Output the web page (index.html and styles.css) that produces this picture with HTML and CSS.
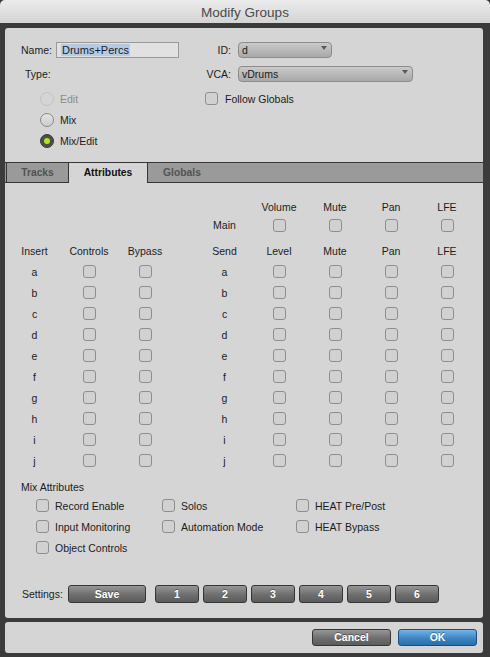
FILE: index.html
```html
<!DOCTYPE html>
<html lang="en">
<head>
  <meta charset="UTF-8" />
  <title>Modify Groups</title>
  <link rel="stylesheet" href="styles.css">
</head>
<body>
  <div class="titlebar">Modify Groups</div>

  <div class="frame">
    <div class="panel main">
      <div class="head">
        <div class="head-left">
          <div class="row name-row">
            <span class="name-label">Name:</span>
            <div class="textbox"><span class="sel">Drums+Percs</span></div>
          </div>
          <div class="row type-row">Type:</div>
          <div class="radios">
            <div class="radio-row disabled"><span class="radio"></span>Edit</div>
            <div class="radio-row"><span class="radio"></span>Mix</div>
            <div class="radio-row"><span class="radio on"></span>Mix/Edit</div>
          </div>
        </div>
        <div class="head-right">
          <div class="row">
            <span class="sel-label">ID:</span>
            <div class="select id-select">d<span class="arrow"></span></div>
          </div>
          <div class="row vca-row">
            <span class="sel-label">VCA:</span>
            <div class="select vca-select">vDrums<span class="arrow"></span></div>
          </div>
          <div class="check-row follow"><span class="cb"></span>Follow Globals</div>
        </div>
      </div>

      <div class="tabs">
        <div class="tab tracks">Tracks</div>
        <div class="tab active">Attributes</div>
        <div class="tab globals">Globals</div>
      </div>

      <div class="attr-grid" id="attrGrid">
        <span></span><span></span><span></span><span></span><span></span>
        <span class="lbl">Volume</span><span class="lbl">Mute</span><span class="lbl">Pan</span><span class="lbl">LFE</span>

        <span></span><span></span><span></span><span></span>
        <span class="lbl">Main</span>
        <span class="cb"></span><span class="cb"></span><span class="cb"></span><span class="cb"></span>

        <span class="lbl colhead">Insert</span><span class="lbl colhead">Controls</span><span class="lbl colhead">Bypass</span><span></span>
        <span class="lbl colhead">Send</span><span class="lbl colhead">Level</span><span class="lbl colhead">Mute</span><span class="lbl colhead">Pan</span><span class="lbl colhead">LFE</span>
      </div>

      <div class="mix-title">Mix Attributes</div>
      <div class="mix-grid">
        <div class="check-row"><span class="cb"></span>Record Enable</div>
        <div class="check-row"><span class="cb"></span>Solos</div>
        <div class="check-row"><span class="cb"></span>HEAT Pre/Post</div>
        <div class="check-row"><span class="cb"></span>Input Monitoring</div>
        <div class="check-row"><span class="cb"></span>Automation Mode</div>
        <div class="check-row"><span class="cb"></span>HEAT Bypass</div>
        <div class="check-row"><span class="cb"></span>Object Controls</div>
      </div>

      <div class="settings">
        <span class="settings-label">Settings:</span>
        <div class="btn save">Save</div>
        <div class="btn num">1</div>
        <div class="btn num">2</div>
        <div class="btn num">3</div>
        <div class="btn num">4</div>
        <div class="btn num">5</div>
        <div class="btn num">6</div>
      </div>
    </div>

    <div class="panel footer">
      <div class="btn wide">Cancel</div>
      <div class="btn wide ok">OK</div>
    </div>
  </div>

  <script>
    // send / insert rows a..j
    const grid = document.getElementById('attrGrid');
    'abcdefghij'.split('').forEach(k => {
      grid.insertAdjacentHTML('beforeend', `
        <span class="lbl">${k}</span><span class="cb"></span><span class="cb"></span><span></span>
        <span class="lbl">${k}</span><span class="cb"></span><span class="cb"></span><span class="cb"></span><span class="cb"></span>
      `);
    });
  </script>
</body>
</html>
```

FILE: styles.css
```css
body {
  margin: 0;
  width: 490px;
  height: 657px;
  overflow: hidden;
  background: #3b3b3b;
  font-family: 'Liberation Sans', Arial, sans-serif;
  font-size: 10.5px;
  color: #1c1c1c;
}
.titlebar {
  height: 23px;
  line-height: 25px;
  text-align: center;
  font-size: 13.5px;
  color: #4a4a4a;
  background: linear-gradient(#ececec, #d3d3d3);
  border-radius: 5px 5px 0 0;
}
.frame {
  padding: 5px 7px 4px 5px;
}
.panel {
  background: #d5d5d5;
  border-radius: 3px;
}
.main {
  height: 590px;
  display: flex;
  flex-direction: column;
}

/* header */
.head {
  display: flex;
  padding: 14px 0 0 16px;
}
.head-left {
  width: 184px;
}
.row {
  display: flex;
  align-items: center;
  height: 16px;
}
.name-label {
  width: 35px;
}
.textbox {
  width: 123px;
  height: 16px;
  box-sizing: border-box;
  border: 1px solid #9a9a9a;
  background: #e1e1e1;
  padding: 0 4px;
  font-size: 11px;
  line-height: 14px;
}
.textbox .sel {
  background: #b4cbe6;
  color: #1b1b2b;
  padding: 0 1px;
}
.type-row {
  margin-top: 8px;
  padding-left: 4px;
}
.radios {
  margin-top: 6px;
  padding-left: 19px;
}
.radio-row {
  display: flex;
  align-items: center;
  gap: 6px;
  height: 21px;
}
.radio {
  width: 14px;
  height: 14px;
  box-sizing: border-box;
  border-radius: 50%;
  border: 1px solid #8a8a8a;
  background: linear-gradient(#e4e4e4, #cdcdcd);
  display: flex;
  align-items: center;
  justify-content: center;
}
.radio-row.disabled {
  color: #8c8c8c;
}
.radio-row.disabled .radio {
  border-color: #c2c2c2;
  background: #d5d5d5;
}
.radio.on {
  background: #4d4d4d;
  border-color: #3a3a3a;
}
.radio.on::after {
  content: '';
  width: 6px;
  height: 6px;
  border-radius: 50%;
  background: #b3e51c;
}
.sel-label {
  width: 26px;
  margin-right: 7px;
  text-align: right;
}
.select {
  display: flex;
  height: 16px;
  box-sizing: border-box;
  border: 1px solid #8c8c8c;
  border-radius: 4px;
  background: linear-gradient(#cacaca, #a9a9a9);
  padding-left: 3px;
  line-height: 15px;
  font-size: 10.5px;
}
.id-select {
  width: 94px;
}
.vca-select {
  width: 175px;
}
.vca-row {
  margin-top: 8px;
}
.arrow {
  margin: 3px 4px 0 auto;
  width: 0;
  height: 0;
  border-left: 3.5px solid transparent;
  border-right: 3.5px solid transparent;
  border-top: 4px solid #5a5a5a;
}
.check-row {
  display: flex;
  align-items: center;
  gap: 6px;
  height: 21px;
}
.follow {
  margin-top: 6px;
  gap: 7px;
}
.cb {
  display: block;
  width: 13px;
  height: 13px;
  box-sizing: border-box;
  border: 1px solid #8e8e8e;
  border-radius: 3px;
  background: #d1d1d1;
}

/* tabs */
.tabs {
  display: flex;
  height: 19px;
  margin-top: 11px;
  border-top: 1px solid #353535;
  border-bottom: 1px solid #353535;
  background: #9a9a9a;
}
.tab {
  box-sizing: border-box;
  line-height: 19px;
  text-align: center;
  font-size: 10.3px;
  font-weight: bold;
  color: #525252;
  border-right: 1px solid #353535;
}
.tab.tracks {
  width: 63px;
  border-left: 1px solid #353535;
  margin-left: 1px;
}
.tab.active {
  width: 79px;
  height: 20px;
  margin-bottom: -1px;
  background: #d5d5d5;
  color: #111;
}
.tab.globals {
  width: 68px;
  border-right: none;
}

/* attributes grid */
.attr-grid {
  display: grid;
  grid-template-columns: 53px 56px 56px 25px 53px 56px 56px 56px 56px;
  grid-template-rows: 18px 18px 27px repeat(10, 21px);
  align-items: center;
  justify-items: center;
  margin-top: 15px;
  padding-left: 3px;
}
.lbl {
  text-align: center;
}
.colhead {
  align-self: end;
  line-height: 19px;
}
.mix-title {
  margin-top: 9px;
  padding-left: 16px;
  line-height: 15px;
}
.mix-grid {
  display: grid;
  grid-template-columns: 126px 134px auto;
  padding-left: 31px;
}

/* buttons */
.settings {
  display: flex;
  align-items: center;
  margin-top: 27px;
  padding-left: 17px;
}
.settings-label {
  width: 46px;
}
.btn {
  height: 18px;
  box-sizing: border-box;
  border: 1px solid #353535;
  border-radius: 3px;
  background: linear-gradient(#979797, #6e6e6e 55%, #5c5c5c);
  color: #fff;
  font-weight: bold;
  font-size: 10.5px;
  line-height: 16px;
  text-align: center;
  text-shadow: 0 -1px 0 rgba(0, 0, 0, 0.35);
}
.save {
  width: 78px;
  margin-right: 9px;
}
.num {
  width: 44px;
  margin-right: 4px;
}
.footer {
  height: 31px;
  margin-top: 4px;
  display: flex;
  justify-content: flex-end;
  gap: 7px;
  padding: 7px 6px 0 0;
  box-sizing: border-box;
}
.wide {
  width: 79px;
  height: 17px;
  line-height: 15px;
}
.ok {
  border-color: #1f4e78;
  background: linear-gradient(#72b4e6, #3d86c4 55%, #2b6ea9);
}
```
